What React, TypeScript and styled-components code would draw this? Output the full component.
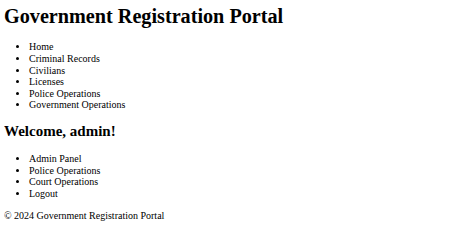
import React from "react";
import styled, { createGlobalStyle } from "styled-components";

const Global = createGlobalStyle`
  html, body { background: #fff; }
  body {
    margin: 5px 5px 5px 4px;
    font-family: "Liberation Serif", "Times New Roman", serif;
    font-size: 10px;
    line-height: 11.6px;
    color: #000;
  }
`;

const Header = styled.header`
  display: block;
`;

const Title = styled.h1`
  font-size: 20.2px;
  line-height: 23px;
  font-weight: bold;
  margin: 0 0 13.4px;
`;

const NavList = styled.ul`
  margin: 10px 0;
  padding-left: 25px;
  list-style: disc;
`;

const Item = styled.li`
  line-height: 11.6px;
`;

const Main = styled.main`
  display: block;
`;

const Welcome = styled.h2`
  font-size: 15px;
  line-height: 17.3px;
  font-weight: bold;
  margin: 12.45px 0;
`;

const Footer = styled.footer`
  display: block;
`;

const FooterText = styled.p`
  margin: 10px 0;
`;

const nav = ["Home", "Criminal Records", "Civilians", "Licenses", "Police Operations", "Government Operations"];
const admin = ["Admin Panel", "Police Operations", "Court Operations", "Logout"];

export default function App() {
  return (
    <>
      <Global />
      <Header>
        <Title>Government Registration Portal</Title>
        <nav>
          <NavList>
            {nav.map((n) => (
              <Item key={n}>{n}</Item>
            ))}
          </NavList>
        </nav>
      </Header>
      <Main>
        <Welcome>Welcome, admin!</Welcome>
        <NavList>
          {admin.map((n) => (
            <Item key={n}>{n}</Item>
          ))}
        </NavList>
      </Main>
      <Footer>
        <FooterText>© 2024 Government Registration Portal</FooterText>
      </Footer>
    </>
  );
}
